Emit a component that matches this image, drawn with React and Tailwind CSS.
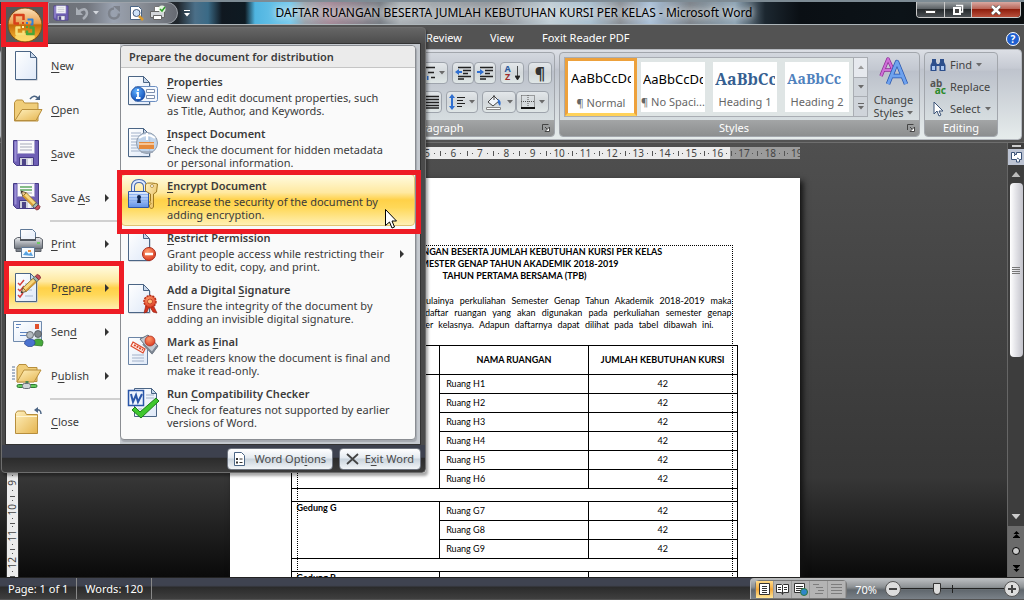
import clsx from "clsx";

const PAGE = "M3.5 1.5h15l6 6v22h-21z";

function Pencil({ transform }) {
  return (
    <g transform={transform}>
      <path d="M0 0l5-2.5v5z" fill="#e9c48c" stroke="#4a3a20" strokeWidth=".7" />
      <path d="M0 0l2-1v2z" fill="#222" />
      <path d="M5-2.5h14v5h-14z" fill="#f6d77c" stroke="#8a6a26" strokeWidth=".8" />
      <path d="M5 .8h14v1.7h-14z" fill="#d59a35" />
      <path d="M19-2.5h3v5h-3z" fill="#9fb4ae" stroke="#4c5d5a" strokeWidth=".8" />
      <path d="M22-2.500h2.500q2 2.500 0 5h-2.500z" fill="#c9505a" stroke="#7b2a35" strokeWidth=".8" />
    </g>
  );
}

function Floppy({ y = 0 }) {
  return (
    <g transform={`translate(0 ${y})`}>
      <path d="M1.500 1.500h25v25h-22l-3-3z" fill="#6f60b5" stroke="#453a85" />
      <path d="M2.500 2.500h2v20h-2z" fill="#9b8fd4" />
      <path d="M5.500 1.500h17v13h-17z" fill="#fafafc" stroke="#a9a5cf" strokeWidth=".8" />
      <path d="M8 5h12M8 8h12M8 11h12" stroke="#a5a9b8" strokeWidth="1" />
      <path d="M7.500 18.500h14v8h-14z" fill="#cfd0dc" stroke="#453a85" />
      <path d="M10 20h4v6h-4z" fill="#4d4487" />
      <path d="M16 20h3v6h-3z" fill="#f2f2f8" />
    </g>
  );
}

function Sheet({ lines = false }) {
  return (
    <g>
      <path d={PAGE} transform="translate(.7 .7)" fill="none" stroke="#c6c9d0" />
      <path d={PAGE} fill="url(#paper)" stroke="#4b6585" />
      <path d="M18.500 1.500v6h6z" fill="#c9d8ec" stroke="#4b6585" />
      {lines && <path d="M6 6h10M6 9h10M6 12h15M6 15h15M6 18h15M6 21h15M6 24h15" stroke="#a2b1c9" />}
    </g>
  );
}

function Folder() {
  return (
    <g>
      <path d="M2.500 27v-18.500l2-2.500h6l2 3h13.500v18z" fill="#f0cd79" stroke="#b78e3c" />
      <path d="M3 26.500l7-11h20l-6 11z" fill="url(#gold)" stroke="#b78e3c" />
    </g>
  );
}

/* shared gradients for every drawing on the screen */
function Gradients() {
  return (
    <svg width="0" height="0" className="absolute" aria-hidden="true">
      <defs>
        <linearGradient id="paper" x1="0" y1="0" x2="1" y2="1">
          <stop offset="0" stopColor="#ffffff" />
          <stop offset="1" stopColor="#dfe9f8" />
        </linearGradient>
        <linearGradient id="gold" x1="0" y1="0" x2="1" y2="1">
          <stop offset="0" stopColor="#fff0bd" />
          <stop offset="1" stopColor="#e5b550" />
        </linearGradient>
        <linearGradient id="steel" x1="0" y1="0" x2="0" y2="1">
          <stop offset="0" stopColor="#e9ebee" />
          <stop offset="1" stopColor="#70767f" />
        </linearGradient>
        <linearGradient id="blue" x1="0" y1="0" x2="0" y2="1">
          <stop offset="0" stopColor="#e4efff" />
          <stop offset="1" stopColor="#5f90e6" />
        </linearGradient>
        <radialGradient id="ball" cx=".4" cy=".3" r=".8">
          <stop offset="0" stopColor="#5fb0ff" />
          <stop offset="1" stopColor="#0a45b0" />
        </radialGradient>
        <radialGradient id="stop" cx=".4" cy=".3" r=".8">
          <stop offset="0" stopColor="#ff9a6b" />
          <stop offset="1" stopColor="#d8321a" />
        </radialGradient>
        <linearGradient id="orb" x1="0" y1="0" x2="0" y2="1">
          <stop offset="0" stopColor="#fbe3bd" />
          <stop offset=".45" stopColor="#e9a050" />
          <stop offset=".5" stopColor="#c66a08" />
          <stop offset="1" stopColor="#ffc23c" />
        </linearGradient>
      </defs>
    </svg>
  );
}

const ICONS = {
  new: <Sheet />,
  open: (
    <g>
      <Folder />
      <path d="M18 5q4-5 8-1" fill="none" stroke="#4a6382" strokeWidth="1.500" />
      <path d="M28 1v5h-5z" fill="#4a6382" />
    </g>
  ),
  save: <Floppy y={1} />,
  saveAs: (
    <g>
      <Floppy />
      <path d="M8 5h12M8 8h12" stroke="#3ba536" strokeWidth="1.200" />
      <Pencil transform="translate(9 9) rotate(45)" />
    </g>
  ),
  print: (
    <g>
      <path d="M8.500 1.500h12l3 3v9h-15z" fill="url(#paper)" stroke="#5f7896" />
      <path d="M2.500 11.500l3-2h22l3 2v9h-28z" fill="url(#steel)" stroke="#5c6169" />
      <path d="M8 9h16v4h-16z" fill="#50565e" />
      <path d="M9 8h14v3h-14z" fill="#eef3fb" />
      <path d="M25 15h3" stroke="#58d04a" strokeWidth="1.500" />
      <path d="M4 20.500h25v3h-25z" fill="#7b818a" stroke="#5c6169" />
      <path d="M9.500 19.500h13v10h-13z" fill="#f6fbff" stroke="#5f7896" />
      <path d="M11 27l3-4 3 3 2-2 2 4z" fill="#58a2e0" />
      <path d="M16 22h3v2h-3z" fill="#e7913f" />
    </g>
  ),
  prepare: (
    <g>
      <Sheet />
      <path d="M6 11l2 2 4-5M6 17l2 2 4-5M6 23l2 2 3-4" fill="none" stroke="#d5403c" strokeWidth="1.500" />
      <path d="M13 12h7M13 18h7M13 24h8" stroke="#a9b7cf" />
      <Pencil transform="translate(9 21) rotate(-43)" />
    </g>
  ),
  send: (
    <g>
      <path d="M1.500 5.500h28v20h-28z" fill="url(#paper)" stroke="#6f8aad" />
      <path d="M4 8.500h5M4 11.500h3M8 16.500h8M8 19.500h6" stroke="#5c82bd" />
      <path d="M23 8h4v5h-4z" fill="#e0502e" />
      <circle cx="26" cy="18" r="3.500" fill="#7f858b" stroke="#44494e" strokeWidth=".7" />
      <path d="M20.500 29q0-6 5.500-6t5 4l-1 3z" fill="#45a93b" stroke="#256b20" strokeWidth=".7" />
      <circle cx="18" cy="19" r="3.500" fill="#b5bbc1" stroke="#44494e" strokeWidth=".7" />
      <path d="M12.500 28q0-5 5.500-5t5 5l-3 2.500h-4z" fill="#4a72cf" stroke="#28448e" strokeWidth=".7" />
    </g>
  ),
  publish: (
    <g>
      <path d="M0 7h3M0 10h3M0 13h3M0 16h3M0 19h3" stroke="#5a7396" />
      <path d="M5 22v-14.500l2-3h7l2 3h9v14z" fill="#f0cd79" stroke="#b78e3c" />
      <path d="M5 22l7-12h17l-7 12z" fill="url(#gold)" stroke="#b78e3c" />
      <path d="M15 21v4" stroke="#4b8550" strokeWidth="3" />
      <rect x="5" y="24.500" width="20" height="3" rx="1.500" fill="#63c95d" stroke="#2e7b33" />
      <rect x="10.500" y="23.500" width="8" height="5" rx="2" fill="#cfd4d8" stroke="#687078" />
    </g>
  ),
  close: (
    <g>
      <path d="M3.500 27.500v-20l2-2.500h7l2 3.500h11v19z" fill="url(#gold)" stroke="#b78e3c" />
      <path d="M4 10.500h21" stroke="#fff6d6" />
      <path d="M29 8q0-5-5-4" fill="none" stroke="#4a6382" strokeWidth="1.500" />
      <path d="M26 1v6l-4-3z" fill="#4a6382" />
    </g>
  ),
  properties: (
    <g transform="translate(-3 0)">
      <Sheet />
      <rect x="9.500" y="11.500" width="23" height="15" rx="2" fill="#f4f8fe" stroke="#6c8fc2" />
      <path d="M21.500 14.500h8v3h-8zM21.500 20.500h8v3h-8z" fill="#fff" stroke="#7d8fae" />
      <circle cx="13" cy="19" r="7" fill="url(#ball)" stroke="#0d3c8f" strokeWidth=".7" />
      <path d="M13 14v2M11.500 18h1.500v5M11 23h4.500" fill="none" stroke="#fff" strokeWidth="1.800" />
    </g>
  ),
  inspect: (
    <g transform="translate(-3 0)">
      <Sheet lines />
      <circle cx="22" cy="16" r="10.500" fill="#bcd0e8" fillOpacity=".9" stroke="#8f9bab" />
      <path d="M14 11q8-6 16 0M22 6v7" fill="none" stroke="#fff" strokeWidth="2" />
      <path d="M14 15h15v7h-15z" fill="#e58a3c" />
      <path d="M14 17h15" stroke="#fbd9b6" strokeWidth="1.500" />
      <path d="M16 25h12" stroke="#9aa4b4" strokeWidth="1.500" />
    </g>
  ),
  encrypt: (
    <g>
      <path d="M5 13v-5q0-6 6-6t6 6v5" fill="none" stroke="#4568ad" strokeWidth="4" />
      <path d="M5 13v-5q0-6 6-6t6 6v5" fill="none" stroke="#dde9ff" strokeWidth="2" />
      <path d="M.500 12.500h20v16h-20z" fill="url(#blue)" stroke="#2e56a8" />
      <path d="M1 15.500h19M1 18.500h19M1 21.500h19M1 24.500h19" stroke="#7fa8f0" strokeWidth=".8" />
      <circle cx="11" cy="18" r="2" fill="#10254d" />
      <path d="M10 18h2l1 6h-4z" fill="#10254d" />
      <path d="M17.500 5.500q1-2 6-1.500t6 1l-1 8-3 2v13l-2 2-2-2v-2l1.500-1.500-1.500-1.500 1-1v-7l-5-3z" fill="url(#gold)" stroke="#a07920" />
      <circle cx="24" cy="7" r="1.500" fill="#fff" stroke="#a07920" strokeWidth=".7" />
    </g>
  ),
  restrict: (
    <g transform="translate(-3 0)">
      <Sheet />
      <circle cx="24" cy="23" r="6.500" fill="url(#stop)" stroke="#a8281a" />
      <path d="M20 23h8" stroke="#fff" strokeWidth="2.500" />
    </g>
  ),
  sign: (
    <g transform="translate(-3 0)">
      <Sheet />
      <path d="M21 22l-2 8 3-1 2-5zM28 22l4 8-4-1-3-5z" fill="#d5331d" stroke="#921f14" strokeWidth=".7" />
      <circle cx="25" cy="18.500" r="6" fill="url(#stop)" stroke="#b52e18" strokeWidth="1.500" strokeDasharray="2 1" />
      <circle cx="25" cy="18.500" r="2.500" fill="#ffbd7a" stroke="#b52e18" strokeWidth=".8" />
    </g>
  ),
  final: (
    <g>
      <path d="M.500 2.500h19v27h-19z" fill="url(#paper)" stroke="#6b84a5" />
      <path d="M4 20h12M4 23h12M4 26h12" stroke="#a2b1c9" />
      <path d="M12 4l8-4 10 11-6 8z" fill="#c3cad2" stroke="#656e7a" />
      <path d="M15 9l9 9 5-7" fill="none" stroke="#7c8591" strokeWidth="2" />
      <path d="M5 7l12 7-2 4-12-7z" fill="#fff2ee" stroke="#dd4a2c" strokeWidth="1.200" />
      <path d="M6 10l9 5" stroke="#dd4a2c" strokeWidth="2" strokeDasharray="2 1" />
      <circle cx="22" cy="6" r="5" fill="url(#stop)" stroke="#a8281a" strokeWidth=".7" />
    </g>
  ),
  check: (
    <g>
      <path d="M6.500 1.500h17l5 5v23h-22z" fill="url(#paper)" stroke="#4b6585" />
      <path d="M23.500 1.500v5h5z" fill="#c9d8ec" stroke="#4b6585" />
      <path d="M18 8h8M18 11h8M10 22h4" stroke="#a2b1c9" />
      <path d="M.500 3.500h15v15h-15z" fill="#eef4ff" stroke="#2a56a8" strokeWidth="1.500" />
      <path d="M3 7l2 8 3-7 2 7 4-8" fill="none" stroke="#2a56a8" strokeWidth="2" />
      <path d="M4 23l3-3 5 5 16-14 3 3-18 17z" fill="#3fc72e" stroke="#1b7d18" />
    </g>
  ),
};

function MenuIcon({ name }) {
  return (
    <svg viewBox="0 0 32 32" className="size-8 shrink-0 overflow-visible" aria-hidden="true">
      {ICONS[name]}
    </svg>
  );
}

function Caret({ className = "text-[#6b6b6b]" }) {
  return (
    <svg viewBox="0 0 6 4" className={clsx("h-1 w-1.5 shrink-0", className)} aria-hidden="true">
      <path d="M0 0h6l-3 3.500z" fill="currentColor" />
    </svg>
  );
}

const MENU = [
  { icon: "new", label: ["", "N", "ew"] },
  { icon: "open", label: ["", "O", "pen"] },
  { icon: "save", label: ["", "S", "ave"] },
  { icon: "saveAs", label: ["Save ", "A", "s"], more: true },
  { icon: "print", label: ["", "P", "rint"], more: true, line: true },
  { icon: "prepare", label: ["Pr", "e", "pare"], more: true, active: true },
  { icon: "send", label: ["Sen", "d", ""], more: true },
  { icon: "publish", label: ["P", "u", "blish"], more: true },
  { icon: "close", label: ["", "C", "lose"], line: true },
];

const ACTIONS = [
  { icon: "properties", label: ["", "P", "roperties"], text: ["View and edit document properties, such", "as Title, Author, and Keywords."] },
  { icon: "inspect", label: ["", "I", "nspect Document"], text: ["Check the document for hidden metadata", "or personal information."] },
  { icon: "encrypt", label: ["", "E", "ncrypt Document"], text: ["Increase the security of the document by", "adding encryption."], active: true },
  { icon: "restrict", label: ["", "R", "estrict Permission"], text: ["Grant people access while restricting their", "ability to edit, copy, and print."], more: true },
  { icon: "sign", label: ["Add a Digital ", "S", "ignature"], text: ["Ensure the integrity of the document by", "adding an invisible digital signature."] },
  { icon: "final", label: ["Mark as ", "F", "inal"], text: ["Let readers know the document is final and", "make it read-only."] },
  { icon: "check", label: ["Run ", "C", "ompatibility Checker"], text: ["Check for features not supported by earlier", "versions of Word."] },
];

function Label({ parts }) {
  return (
    <span>
      {parts[0]}
      <u className="underline-offset-2">{parts[1]}</u>
      {parts[2]}
    </span>
  );
}

function MoreArrow() {
  return (
    <svg viewBox="0 0 4 8" className="h-2 w-1 shrink-0" aria-hidden="true">
      <path d="M0 0l4 4-4 4z" fill="#333" />
    </svg>
  );
}

const GLOW = "bg-[linear-gradient(#fffbe0,#ffe9a0_35%,#ffd148_50%,#ffd858_65%,#fff0b4)]";
const FRAME = "pointer-events-none absolute z-10 border-[5px] border-[#ee1c25]";
const FOOTER_BUTTON =
  "flex h-[22px] items-center justify-between rounded-sm border border-[#6f7580] bg-[linear-gradient(#fff,#e4eaf0_45%,#c9d3dc_50%,#f2f5f8)] px-1.5 text-[#4a4a4a]";

function OfficeMenu() {
  return (
    <div className="absolute left-px top-[27px] z-20 flex w-[425px] flex-col rounded border border-[#6d6d6d] bg-[linear-gradient(#666,#4a4a4a_17px)] pl-[3px] pr-1 pt-[15px] text-[#3b3b3b] shadow-[2px_3px_3px_rgba(0,0,0,.35)]">
      <div className="flex border border-[#333] bg-[#c5c9cf]">
        <nav aria-label="File" className="flex w-[114px] flex-col bg-[#fafafa] text-[11px]">
          {MENU.map((item) => (
            <div key={item.icon} className="relative">
              {item.line && <hr className="ml-auto w-[70px] border-t-2 border-[#d0d0d0]" />}
              <button
                type="button"
                className={clsx("flex h-11 w-full items-center gap-[7px] pl-1.5 pr-[11px] text-left", item.active && GLOW)}
              >
                <MenuIcon name={item.icon} />
                <span className="flex-1">
                  <Label parts={item.label} />
                </span>
                {item.more && <MoreArrow />}
              </button>
              {item.active && <span className={clsx(FRAME, "-bottom-1 -left-0.5 -right-1 -top-[5px]")} />}
            </div>
          ))}
        </nav>
        <section className="mb-1 mr-1 mt-px flex-1 rounded border border-[#8a8d92] bg-[#fafafa] shadow-[1px_2px_1px_#a5a9b0]">
          <h2 className="mb-0.5 rounded-t border-b border-[#c5c5c5] bg-[#ebebeb] pl-2 text-[11px] font-semibold leading-[21px]">
            Prepare the document for distribution
          </h2>
          {ACTIONS.map((item) => (
            <div key={item.icon} className="relative">
              <button
                type="button"
                className={clsx(
                  "flex h-[52px] w-full gap-[7px] border pl-1.5 pr-2.5 pt-1 text-left",
                  item.active ? "rounded-sm border-[#dfc373] " + GLOW : "border-transparent"
                )}
              >
                <MenuIcon name={item.icon} />
                <span className="flex flex-1 flex-col whitespace-nowrap text-[11px] leading-[13px]">
                  <b className="mb-0.5 font-semibold leading-[14px]">
                    <Label parts={item.label} />
                  </b>
                  <span>{item.text[0]}</span>
                  <span>{item.text[1]}</span>
                </span>
                {item.more && (
                  <span className="self-center">
                    <MoreArrow />
                  </span>
                )}
              </button>
              {item.active && <span className={clsx(FRAME, "-bottom-2 -left-1 -right-1.5 -top-1")} />}
            </div>
          ))}
        </section>
      </div>
      <div className="-ml-[3px] -mr-1 flex justify-end gap-1.5 rounded-b bg-[linear-gradient(#3d414e_45%,#2c2c2c_50%,#3c3c3c)] px-1 pb-0.5 pt-[3px] text-[11px]">
        <button type="button" className={clsx(FOOTER_BUTTON, "w-[106px]")}>
          <svg viewBox="0 0 11 14" className="h-3.5 w-[11px]" aria-hidden="true">
            <path d="M.500.500h7l3 3v10h-10z" fill="#fff" stroke="#4b6585" />
            <path d="M2 6h2v2h-2zM2 9.500h2v2h-2z" fill="#333" />
            <path d="M5.500 7h3M5.500 10.500h3" stroke="#333" />
          </svg>
          <Label parts={["Word Opt", "i", "ons"]} />
        </button>
        <button type="button" className={clsx(FOOTER_BUTTON, "w-[82px]")}>
          <svg viewBox="0 0 13 12" className="h-3 w-[13px]" aria-hidden="true">
            <path d="M1 1l11 10M12 1L1 11" stroke="#444" strokeWidth="1.800" />
          </svg>
          <Label parts={["E", "x", "it Word"]} />
        </button>
      </div>
    </div>
  );
}

function OfficeButton() {
  return (
    <button
      type="button"
      aria-label="Office Button"
      className="absolute left-px top-0.5 z-30 flex h-[45px] w-[47px] items-center justify-center border-[5px] border-[#ee1c25] bg-[#585858]"
    >
      <svg viewBox="0 0 36 36" className="size-9 shrink-0" aria-hidden="true">
        <circle cx="18" cy="18" r="17" fill="url(#orb)" stroke="#7d4a10" />
        <ellipse cx="18" cy="30" rx="10" ry="4" fill="#ffe27a" fillOpacity=".8" />
        <g fill="none" strokeLinejoin="round">
          <path d="M12 16.500h-4.500v-8.500h9v5" stroke="#d8401a" strokeWidth="2.500" />
          <path d="M20.500 12.500h5v5h-2" stroke="#2f7fd6" strokeWidth="2" />
          <path d="M13.500 20.500h-4v6.500h7v-3.500" stroke="#f8df7a" strokeWidth="2.500" />
          <path d="M22.500 20.500h4v6.500h-6.500v-3.500" stroke="#4aa53a" strokeWidth="2.500" />
        </g>
        <path d="M15 15h2v2h-2z" fill="#d8401a" />
        <path d="M19 15h2v2h-2z" fill="#2f7fd6" />
        <path d="M15 19h2v2h-2z" fill="#fff0a8" />
        <path d="M19 19h2v2h-2z" fill="#4aa53a" />
      </svg>
    </button>
  );
}

function QuickAccess() {
  return (
    <div className="flex h-[22px] items-center">
      <div className="ml-12 flex h-[22px] w-[130px] items-center gap-1.5 rounded-r-full border border-[#9da2a9] bg-[linear-gradient(90deg,#6d7178,#71757d_30%,#9aa2b0_50%,#8b9098_70%,#666a72)] pl-1">
        <button type="button" aria-label="Save">
          <svg viewBox="0 0 28 28" className="size-4">
            <Floppy />
          </svg>
        </button>
        <button type="button" aria-label="Undo" className="flex items-center gap-1">
          <svg viewBox="0 0 14 14" className="size-3.5">
            <path d="M3 6q8-6 9 1 0 3-4 6" fill="none" stroke="#a9aeb6" strokeWidth="2.500" />
            <path d="M1 1v8h7z" fill="#a9aeb6" />
          </svg>
          <Caret className="text-[#d2d6dc]" />
        </button>
        <button type="button" aria-label="Repeat" className="px-0.5">
          <svg viewBox="0 0 14 14" className="size-3.5">
            <path d="M7 2.500a5 5 0 1 0 5 5" fill="none" stroke="#7d828b" strokeWidth="2.500" />
            <path d="M6 0h7v6z" fill="#7d828b" />
          </svg>
        </button>
        <button type="button" aria-label="Print Preview">
          <svg viewBox="0 0 15 15" className="size-[15px]">
            <path d="M1.500.500h8l3 3v10h-11z" fill="#fff" stroke="#4b6585" />
            <circle cx="7.500" cy="7" r="3.500" fill="#cfe3fa" stroke="#44597a" />
            <path d="M10 10l4 4" stroke="#d99a2e" strokeWidth="2.500" />
          </svg>
        </button>
        <button type="button" aria-label="Quick Print">
          <svg viewBox="0 0 16 16" className="size-4">
            <path d="M4.500 1.500h7v6h-7z" fill="#fff" stroke="#777" />
            <path d="M.500 6.500h14v6h-14z" fill="#d3d6da" stroke="#666" />
            <path d="M3.500 10.500h8v4h-8z" fill="#fff" stroke="#666" />
            <circle cx="12" cy="4" r="3.500" fill="#e4f5e0" />
            <path d="M10 4l2 2 3-4" fill="none" stroke="#2f9a2a" strokeWidth="1.500" />
          </svg>
        </button>
      </div>
      <button type="button" aria-label="Customize" className="ml-1.5 flex flex-col items-center gap-0.5 text-white">
        <span className="h-px w-1.5 bg-white" />
        <Caret className="text-white" />
      </button>
    </div>
  );
}

const CAPTION = "flex items-center justify-center bg-[linear-gradient(#9a9fa2,#5b6064_45%,#25292c_50%,#4b5054)]";

function TitleBar() {
  return (
    <header className="grid h-[25px] grid-cols-[1fr_auto_1fr] border-b border-t-2 border-b-[#aeb6ba] border-t-[#7d8b94] bg-[linear-gradient(90deg,#30343a_0,#20262c_178px,#4b6f88_195px,#3a6a86_208px,#101820_222px,#0e1a22_245px,#4fb4e0_255px,#76cbee_290px,#9aa3ab_305px,#a58a98_330px,#777d84_380px,#a9b0b5_400px,#8f949a_500px,#c0ced6_550px,#a9c0d0_590px,#8b9096_620px,#a9c0d8_650px,#7e858c_690px,#8fa5b5_735px,#1c2730_765px,#0a0f14_800px,#0c1318_900px,#0b0e10)]">
      <QuickAccess />
      <h1 className="whitespace-nowrap pl-1 text-xs leading-[22px] text-black [text-shadow:0_0_6px_#fff,0_0_8px_#ddd]">
        DAFTAR RUANGAN BESERTA JUMLAH KEBUTUHAN KURSI PER KELAS - Microsoft Word
      </h1>
      <div className="mr-[3px] flex h-4 justify-end">
        <div className="flex divide-x divide-[#c9c9c9] overflow-hidden rounded-b border border-t-0 border-[#c9c9c9]">
          <button type="button" aria-label="Minimize" className={clsx(CAPTION, "w-7")}>
            <span className="mt-1 h-1 w-[11px] border border-[#444] bg-white" />
          </button>
          <button type="button" aria-label="Restore" className={clsx(CAPTION, "w-[27px]")}>
            <svg viewBox="0 0 12 12" className="size-3">
              <path d="M4 1.500h6.500v6.500h-2" fill="none" stroke="#fff" strokeWidth="1.500" />
              <path d="M2 4h6v6h-6z" fill="#444" stroke="#fff" strokeWidth="2" />
            </svg>
          </button>
          <button type="button" aria-label="Close" className="flex w-12 items-center justify-center bg-[linear-gradient(#d9a9a2,#b96558_45%,#8f1f0e_50%,#b8503c)]">
            <svg viewBox="0 0 12 10" className="h-2.5 w-3">
              <path d="M2 1l8 8M10 1l-8 8" stroke="#444" strokeWidth="3.800" />
              <path d="M2 1l8 8M10 1l-8 8" stroke="#fff" strokeWidth="2.500" />
            </svg>
          </button>
        </div>
      </div>
    </header>
  );
}

function Tabs() {
  return (
    <nav className="flex h-6 items-center gap-7 bg-[#535353] pb-px pl-[426px] pr-1 pt-1 text-[11px] text-white">
      <a href="#review">Review</a>
      <a href="#view">View</a>
      <a href="#foxit">Foxit Reader PDF</a>
      <button type="button" aria-label="Help" className="ml-auto flex size-3.5 items-center justify-center rounded-full border border-white bg-[#1f5fd0] text-[10px] font-bold leading-none">
        ?
      </button>
    </nav>
  );
}

function Group({ title, launcher, className, children }) {
  return (
    <section className={clsx("flex shrink-0 flex-col overflow-hidden rounded-sm border border-[#a2a6ac] bg-[linear-gradient(#d3d7de,#c3c8d1_20%,#bcc1cb_22%,#dfe7e7)]", className)}>
      <div className="flex flex-1">{children}</div>
      <footer className="flex h-4 items-center bg-[linear-gradient(#a3a5a6,#8c8e8f)] text-[11px] leading-4 text-white">
        <span className={clsx("flex-1 text-center", launcher && "pl-px")}>{title}</span>
        {launcher && (
          <button type="button" aria-label={title + " settings"} className="pr-1">
            <svg viewBox="0 0 8 8" className="size-2">
              <path d="M.500 6v-5.500h6" fill="none" stroke="#444" />
              <path d="M3 3l2 2" stroke="#444" />
              <path d="M3 7.500h4.500v-4.500z" fill="#fff" stroke="#444" />
            </svg>
          </button>
        )}
      </footer>
    </section>
  );
}

const TOOL = "flex h-[22px] items-center justify-center gap-1 rounded-sm border border-[#9ea4ac] bg-[linear-gradient(#e3e7ea,#d2d7da_50%,#dfe6e6)] px-0.5";

function Lines({ arrow }) {
  return (
    <svg viewBox="0 0 16 14" className="h-3.5 w-4" aria-hidden="true">
      <path d="M3 1.500h13M8 4.500h8M8 7.500h5M3 10.500h13M3 13h6" stroke="#222" strokeWidth="1.500" />
      <path d={arrow === "left" ? "M0 6l4-3v2h3v2h-3v2z" : "M7 6l-4-3v2h-3v2h3v2z"} fill="#2f6fd0" />
    </svg>
  );
}

function ParagraphTools() {
  return (
    <div className="flex flex-1 flex-col items-end gap-[7px] pr-0.5 pt-[9px]">
      <div className="flex gap-1">
        <button type="button" aria-label="Multilevel list" className={TOOL}>
          <svg viewBox="0 0 16 14" className="h-3.5 w-4">
            <path d="M6 1.500h10M9 6.500h6M12 11.500h4" stroke="#222" strokeWidth="1.500" />
            <path d="M1 1h2v2h-2zM4 6h2v2h-2zM8 10h1.500v4h-1.500z" fill="#2f6fd0" />
          </svg>
          <Caret />
        </button>
        <div className="flex">
          <button type="button" aria-label="Decrease indent" className={TOOL}>
            <Lines arrow="left" />
          </button>
          <button type="button" aria-label="Increase indent" className={TOOL}>
            <Lines arrow="right" />
          </button>
        </div>
        <button type="button" aria-label="Sort" className={clsx(TOOL, "w-6")}>
          <span className="flex flex-col text-[9px] font-bold leading-[8px]">
            <span className="text-[#2b5a9e]">A</span>
            <span className="text-[#9e2b2b]">Z</span>
          </span>
          <svg viewBox="0 0 5 15" className="h-[15px] w-[5px]">
            <path d="M2.500 0v13M0 10l2.500 4 2.500-4z" fill="#222" stroke="#222" strokeWidth=".8" />
          </svg>
        </button>
        <button type="button" aria-label="Show marks" className={clsx(TOOL, "w-6 text-base font-bold text-[#333]")}>
          ¶
        </button>
      </div>
      <div className="flex gap-1 pr-[3px]">
        <button type="button" aria-label="Justify" className={TOOL}>
          <svg viewBox="0 0 16 14" className="h-3.5 w-4">
            <path d="M0 1.500h16M0 4.500h16M0 7.500h16M0 10.500h16M0 13h16" stroke="#222" strokeWidth="1.500" />
          </svg>
        </button>
        <button type="button" aria-label="Line spacing" className={TOOL}>
          <svg viewBox="0 0 16 16" className="size-4">
            <path d="M3 0l3 4h-2v8h2l-3 4-3-4h2v-8h-2z" fill="#2f6fd0" />
            <path d="M8 3.500h8M8 6.500h6M8 9.500h8M8 12.500h5" stroke="#222" />
          </svg>
          <Caret />
        </button>
        <div className="flex">
          <button type="button" aria-label="Shading" className={TOOL}>
            <svg viewBox="0 0 18 16" className="h-4 w-[18px]">
              <path d="M3 8l6-6 5 5-6 5z" fill="#f1f5fa" stroke="#444" />
              <path d="M9 6v-5" stroke="#444" />
              <path d="M13 5q4 2 2 7-3-3-2-7" fill="#2f6fd0" />
              <path d="M1.500 13.500h14v2h-14z" fill="#fff" stroke="#888" />
            </svg>
            <Caret />
          </button>
          <button type="button" aria-label="Borders" className={clsx(TOOL, "w-[33px]")}>
            <svg viewBox="0 0 14 14" className="size-3.5">
              <path d="M.500.500h13v12M.500.500v12M7 0v12M0 6.500h14" fill="none" stroke="#555" strokeDasharray="1 1" />
              <path d="M0 13h14" stroke="#111" strokeWidth="2" />
            </svg>
            <Caret />
          </button>
        </div>
      </div>
    </div>
  );
}

const STYLES = [
  { sample: "AaBbCcDc", name: "¶ Normal", look: "text-[13px] text-black", active: true },
  { sample: "AaBbCcDc", name: "¶ No Spaci...", look: "text-[13px] text-black" },
  { sample: "AaBbCc", name: "Heading 1", look: "font-['Noto_Serif','DejaVu_Serif',serif] text-base font-bold text-[#365f91]" },
  { sample: "AaBbCc", name: "Heading 2", look: "font-['Noto_Serif','DejaVu_Serif',serif] text-sm font-bold text-[#4f81bd]" },
];

function StylesTools() {
  return (
    <>
      <div className="ml-1 mt-1 flex h-[60px] border border-[#a9adb3] bg-[#dfe5e5]">
        {STYLES.map((style) => (
          <button
            key={style.name}
            type="button"
            className={clsx(
              "w-[72px] overflow-hidden p-0",
              style.active ? "border-[3px] border-[#eda13c] border-b-[#ffd25a]" : "border-4 border-transparent"
            )}
          >
            <span className="flex h-full flex-col items-center justify-between overflow-hidden whitespace-nowrap bg-white pb-0.5 pt-1.5">
              <span className={clsx("w-[60px] overflow-hidden text-left leading-[22px]", style.look)}>{style.sample}</span>
              <span className="text-[11px] leading-4 text-[#666]">{style.name}</span>
            </span>
          </button>
        ))}
        <div className="flex w-3.5 flex-col divide-y divide-[#a9adb3] border-l border-[#a9adb3] bg-[#cfd4da]">
          <button type="button" aria-label="Scroll up" className="flex flex-1 items-center justify-center bg-[#e6e9ee]">
            <Caret className="rotate-180 text-[#999]" />
          </button>
          <button type="button" aria-label="Scroll down" className="flex flex-1 items-center justify-center">
            <Caret />
          </button>
          <button type="button" aria-label="More styles" className="flex flex-1 flex-col items-center justify-center gap-0.5">
            <span className="h-px w-1.5 bg-[#666]" />
            <Caret />
          </button>
        </div>
      </div>
      <button type="button" className="flex flex-1 flex-col items-center pt-1 text-[11px] leading-[13px] text-[#444]">
        <svg viewBox="0 0 30 30" className="mb-1.5 size-[30px]" aria-hidden="true">
          <g strokeLinejoin="round" fill="none">
            <path d="M2 19l7-17 6 13M5 13h8" stroke="#8d2f96" strokeWidth="3.500" />
            <path d="M2 19l7-17 6 13M5 13h8" stroke="#cf6fd8" strokeWidth="2" />
            <path d="M9 27l9-22 9 22M12 19h12" stroke="#2a57ae" strokeWidth="4.500" />
            <path d="M9 27l9-22 9 22M12 19h12" stroke="#6ea2ee" strokeWidth="3" />
          </g>
        </svg>
        <span>Change</span>
        <span className="flex items-center gap-1">
          Styles <Caret />
        </span>
      </button>
    </>
  );
}

function EditingTools() {
  return (
    <div className="flex flex-1 flex-col px-[5px] pt-px text-[11px] text-[#444]">
      <button type="button" className="flex h-[22px] items-center gap-1">
        <svg viewBox="0 0 16 14" className="h-3.5 w-4" aria-hidden="true">
          <path d="M2 1h4v3l1 2h2l1-2v-3h4v3l1.500 3v6h-6v-5h-3v5h-6v-6l1.500-3z" fill="#2d4f8c" />
          <path d="M2 8h3v4h-3zM11 8h3v4h-3z" fill="#a9c6f2" />
        </svg>
        Find <Caret />
      </button>
      <button type="button" className="flex h-[22px] items-center gap-1">
        <span className="w-4 text-[10px] font-bold leading-[7px]" aria-hidden="true">
          <span className="block text-left text-[#555]">ab</span>
          <span className="block text-right text-[#2b8a2b]">ac</span>
        </span>
        Replace
      </button>
      <button type="button" className="flex h-[22px] items-center gap-1">
        <svg viewBox="0 0 16 16" className="size-4" aria-hidden="true">
          <path d="M4 1v12l3-3 2 5 2-1-2-4h4z" fill="#fff" stroke="#3b5377" />
        </svg>
        Select <Caret />
      </button>
    </div>
  );
}

function Ribbon() {
  return (
    <div className="bg-[#535353] pb-0.5">
      <div className="mr-0.5 flex h-[91px] justify-end gap-1 rounded border border-[#b5b9bf] bg-[linear-gradient(#dcdfe5,#c6cad3_20%,#bfc4cd_22%,#e6ecec)] py-0.5 pr-[23px]">
        <Group title="Paragraph" launcher className="w-[226px]">
          <ParagraphTools />
        </Group>
        <Group title="Styles" launcher className="w-[361px]">
          <StylesTools />
        </Group>
        <Group title="Editing" className="w-[74px]">
          <EditingTools />
        </Group>
      </div>
    </div>
  );
}

const H_MARKS = ["2", "1", "", "1", "2", "3", "4", "5", "6", "7", "8", "9", "10", "11", "12", "13", "14", "15", "16", "17", "18", "19"];
const V_MARKS = ["", "1", "2", "3", "4", "5", "6", "7", "8", "9", "10", "11", "12", "13"];

function HorizontalRuler() {
  return (
    <div className="mx-auto h-3 w-[571px] shrink-0 overflow-hidden bg-[linear-gradient(90deg,#9b9b9b_66px,#ececec_66px,#ececec_501px,#9b9b9b_501px)]">
      <div className="grid w-[581px] grid-cols-[repeat(22,1fr)] text-[10px] leading-3 text-[#444]">
        {H_MARKS.map((mark, i) => (
          <span key={i} className="flex items-center justify-between">
            <i className="h-[5px] w-px bg-[#555]" />
            <i className="size-px bg-[#555]" />
            {mark}
            <i className="size-px bg-[#555]" />
            <i className="w-px" />
          </span>
        ))}
      </div>
    </div>
  );
}

function VerticalRuler() {
  return (
    <div className="ml-1.5 mt-[89px] w-[13px] shrink-0 overflow-hidden border-x border-[#333] bg-[#ececec]">
      <div className="grid h-[370px] grid-rows-[repeat(14,1fr)] text-[10px] leading-[11px] text-[#444]">
        {V_MARKS.map((mark, i) => (
          <span key={i} className="flex flex-col items-center justify-between">
            <i className="h-px w-[5px] bg-[#555]" />
            <i className="size-px bg-[#555]" />
            <span className="rotate-180 [writing-mode:vertical-rl]">{mark}</span>
            <i className="size-px bg-[#555]" />
            <i className="h-px" />
          </span>
        ))}
      </div>
    </div>
  );
}

const BUILDINGS = [
  { name: "Gedung H", rooms: ["Ruang H1", "Ruang H2", "Ruang H3", "Ruang H4", "Ruang H5", "Ruang H6"] },
  { name: "Gedung G", rooms: ["Ruang G7", "Ruang G8", "Ruang G9"] },
  { name: "Gedung P", rooms: [""] },
];

function DocumentPage() {
  return (
    <article className="mx-auto mt-[19px] w-[570px] flex-1 bg-white px-[67px] pt-[67px] font-['Lato','Liberation_Sans',sans-serif] text-black shadow-[3px_3px_6px_#111]">
      <div className="h-full border-x border-t border-dotted border-black">
        <div className="text-center text-[9px] font-bold leading-3">
          <p>DAFTAR RUANGAN BESERTA JUMLAH KEBUTUHAN KURSI PER KELAS</p>
          <p>SEMESTER GENAP TAHUN AKADEMIK 2018-2019</p>
          <p>TAHUN PERTAMA BERSAMA (TPB)</p>
        </div>
        <div className="mb-3.5 mt-[13px] whitespace-nowrap text-[9px] leading-3">
          <p className="[text-align-last:justify]">Sehubungan dengan akan dimulainya perkuliahan Semester Genap Tahun Akademik 2018-2019 maka</p>
          <p className="[text-align-last:justify]">bersama ini kami sampaikan daftar ruangan yang akan digunakan pada perkuliahan semester genap</p>
          <p className="pr-[18px] [text-align-last:justify]">dan jumlah kebutuhan kursi per kelasnya. Adapun daftarnya dapat dilihat pada tabel dibawah ini.</p>
        </div>
        <table className="-ml-[7px] w-[447px] table-fixed border-collapse text-[9px] leading-3 [&_td]:border [&_td]:border-black [&_th]:border [&_th]:border-black">
          <thead>
            <tr className="h-[29px]">
              <th>GEDUNG</th>
              <th>NAMA RUANGAN</th>
              <th>JUMLAH KEBUTUHAN KURSI</th>
            </tr>
          </thead>
          {BUILDINGS.map((building) => (
            <tbody key={building.name}>
              {building.rooms.map((room, i) => (
                <tr key={room} className="h-[19px]">
                  {i === 0 && (
                    <td rowSpan={building.rooms.length} className="pl-[5px] align-top font-bold">
                      {building.name}
                    </td>
                  )}
                  <td className="pl-1.5">{room}</td>
                  <td className="text-center">{room && 42}</td>
                </tr>
              ))}
              <tr className="h-[13px]">
                <td colSpan={3} />
              </tr>
            </tbody>
          ))}
        </table>
      </div>
    </article>
  );
}

function ScrollBar() {
  return (
    <div className="flex w-[17px] shrink-0 flex-col items-center border-l border-[#666] bg-[#3d3d3d]">
      <span className="my-0.5 h-0.5 w-[9px] bg-[#ccc]" />
      <button type="button" aria-label="View ruler" className="flex h-4 w-full items-center justify-center bg-[#bcc3d2]">
        <svg viewBox="0 0 13 12" className="h-3 w-[13px]">
          <path d="M1.500 1.500h3v2h2v-2h5v7h-2v2.500h-3v-2.500h-5z" fill="#fff" stroke="#3b5377" />
          <path d="M4 4l1 1M7 7l2 1" stroke="#3b5377" />
        </svg>
      </button>
      <button type="button" aria-label="Scroll up" className="flex h-[18px] items-center">
        <Caret className="scale-150 rotate-180 text-[#bbb]" />
      </button>
      <div className="flex h-[174px] w-[13px] flex-col items-center justify-center gap-px rounded-sm bg-[linear-gradient(90deg,#fff,#e6e6ea_40%,#c3c3cb)]">
        <i className="h-px w-2 bg-[#777]" />
        <i className="h-px w-2 bg-[#777]" />
        <i className="h-px w-2 bg-[#777]" />
        <i className="h-px w-2 bg-[#777]" />
      </div>
      <button type="button" aria-label="Scroll down" className="mt-auto flex h-[18px] items-center">
        <Caret className="scale-150 text-[#ccc]" />
      </button>
      <div className="flex h-[51px] w-full flex-col items-center justify-around bg-[#6b6b6b]">
        <button type="button" aria-label="Previous page">
          <svg viewBox="0 0 7 7" className="size-[7px]">
            <path d="M3.500 0l3 3h-6zM3.500 3l3 3h-6zM0 6h7v1h-7z" />
          </svg>
        </button>
        <button type="button" aria-label="Browse object" className="size-2 rounded-full border border-black bg-[#ccc]" />
        <button type="button" aria-label="Next page">
          <svg viewBox="0 0 7 7" className="size-[7px]">
            <path d="M0 0h7v1h-7zM.500 1h6l-3 3zM.500 4h6l-3 3z" />
          </svg>
        </button>
      </div>
    </div>
  );
}

const VIEWS = [
  { name: "Print layout", path: "M2.500 1.500h10v11h-10zM5 4.500h5M5 6.500h5M5 8.500h5M5 10.500h5", active: true },
  { name: "Reading", path: "M1.500 2.500h5l1 1 1-1h5v8h-5l-1 2-1-2h-5zM7.500 3v9M3 5.500h3M3 7.500h3M9 5.500h3M9 7.500h3" },
  { name: "Web layout", path: "M1.500 1.500h10v9h-10zM3 4.500h7M3 6.500h7M3 8.500h7", globe: true },
  { name: "Outline", path: "M2 2.500h6M5 5.500h7M7 8.500h6M4 11.500h8", dim: true },
  { name: "Draft", path: "M2 2.500h11M2 5.500h11M2 8.500h11M2 11.500h11", dim: true },
];

function StatusBar() {
  return (
    <footer className="flex h-[22px] shrink-0 items-stretch border-t border-[#222] bg-[linear-gradient(#3f4350_35%,#2b2b2b_45%,#3f3f3f)] text-[11px] leading-[21px] text-white">
      <span className="border-r border-[#888] px-2">Page: 1 of 1</span>
      <span className="border-r border-[#888] px-2">Words: 120</span>
      <div className="ml-auto flex items-center rounded-tl border-l border-t border-[#bbb] bg-[linear-gradient(#b9bcbf,#8e9295_40%,#60676d_55%,#7a8188)] px-1">
        <div className="flex rounded-sm border border-[#777]">
          {VIEWS.map((view) => (
            <button
              key={view.name}
              type="button"
              aria-label={view.name}
              className={clsx("flex h-[17px] w-[18px] items-center justify-center border-r border-[#999]", view.active ? "bg-[linear-gradient(#ffdb8a,#f3a83a_50%,#ffe79a)]" : "bg-[#b4b4b4]")}
            >
              <svg viewBox="0 0 15 14" className={clsx("h-3.5 w-[15px]", view.dim ? "text-[#7d7d7d]" : "text-[#333]")}>
                <path d={view.path} fill={view.dim ? "none" : "#fff"} stroke="currentColor" />
                {view.globe && <circle cx="11" cy="10" r="3.500" fill="#2f86c8" stroke="#2f7a3a" />}
              </svg>
            </button>
          ))}
        </div>
        <span className="w-[38px] text-center">70%</span>
        <button type="button" aria-label="Zoom out" className="flex size-4 items-center justify-center rounded-full border border-[#555] bg-[#ddd]">
          <i className="h-0.5 w-2 bg-[#444]" />
        </button>
        <div className="relative flex items-center">
          <i className="absolute left-[51px] h-2 w-px bg-[#222]" />
          <input
            type="range"
            aria-label="Zoom"
            min="10"
            max="190"
            defaultValue="70"
            className="relative h-4 w-[103px] appearance-none bg-[linear-gradient(transparent_7px,#222_7px,#222_8px,transparent_8px)] [&::-webkit-slider-thumb]:h-3 [&::-webkit-slider-thumb]:w-2 [&::-webkit-slider-thumb]:appearance-none [&::-webkit-slider-thumb]:rounded-b-full [&::-webkit-slider-thumb]:border [&::-webkit-slider-thumb]:border-[#333] [&::-webkit-slider-thumb]:bg-[#ddd]"
          />
        </div>
        <button type="button" aria-label="Zoom in" className="relative flex size-4 items-center justify-center rounded-full border border-[#555] bg-[#ddd]">
          <i className="h-0.5 w-2 bg-[#444]" />
          <i className="absolute h-2 w-0.5 bg-[#444]" />
        </button>
      </div>
    </footer>
  );
}

export default function App() {
  return (
    <div className="relative flex h-screen flex-col overflow-hidden bg-[#535353] pb-px font-['Noto_Sans','Open_Sans',sans-serif]">
      <Gradients />
      <TitleBar />
      <Tabs />
      <Ribbon />
      <main className="flex min-h-0 flex-1 overflow-hidden border-t border-[#6e6e6e] bg-[linear-gradient(#4f4f4f,#373737_77%,#0a0a0a)]">
        <VerticalRuler />
        <div className="flex min-w-0 flex-1 flex-col overflow-hidden pl-[3px] pt-1">
          <HorizontalRuler />
          <DocumentPage />
        </div>
        <ScrollBar />
      </main>
      <StatusBar />
      <OfficeMenu />
      <OfficeButton />
      <svg viewBox="0 0 12 20" className="pointer-events-none absolute left-[385px] top-[209px] z-30 h-5 w-3" aria-hidden="true">
        <path d="M.500.500v16l4-3.500 2.500 6 2.500-1-2.500-6h4.500z" fill="#fff" stroke="#000" />
      </svg>
    </div>
  );
}
